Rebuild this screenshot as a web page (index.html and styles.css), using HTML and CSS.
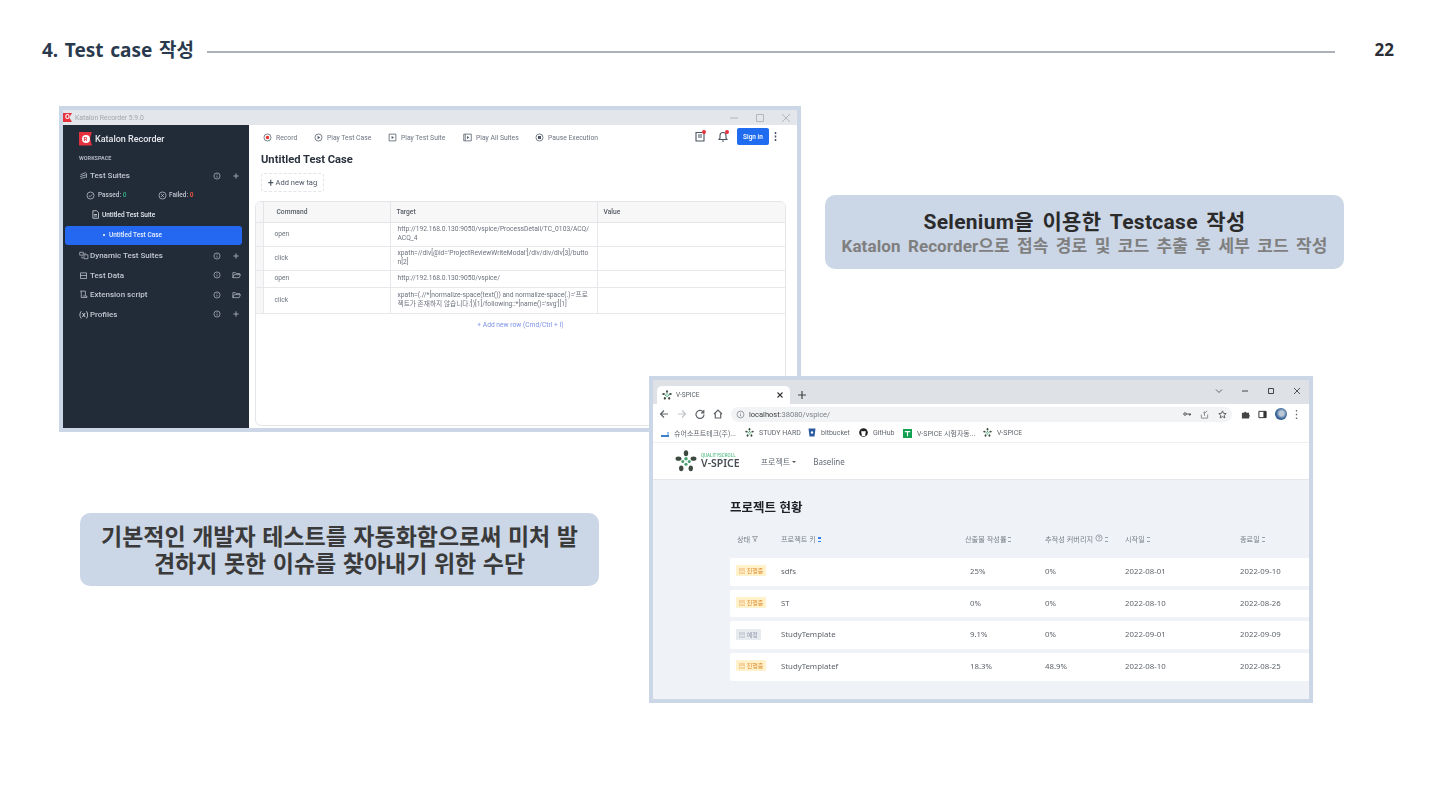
FILE: index.html
```html
<!DOCTYPE html>
<html lang="ko">
<head>
    <meta charset="UTF-8">
    <title>4. Test case 작성</title>
    <link rel="stylesheet" href="styles.css">
</head>
<body>
    <svg class="icon-defs" width="0" height="0">
        <symbol id="i-info" viewBox="0 0 12 12"><circle cx="6" cy="6" r="4.6" fill="none" stroke="currentColor"/><path d="M6 5.4v3M6 3.5v1" stroke="currentColor"/></symbol>
        <symbol id="i-plus" viewBox="0 0 12 12"><path d="M6 2v8M2 6h8" stroke="currentColor" stroke-width="1.1"/></symbol>
        <symbol id="i-folder" viewBox="0 0 14 12"><path d="M1.5 10V2.5h4l1 1.300h5V5.500M1.500 10l2-4.500h9.500l-2 4.500z" fill="none" stroke="currentColor"/></symbol>
        <symbol id="i-ring" viewBox="0 0 12 12"><circle cx="6" cy="6" r="4.700" fill="none" stroke="currentColor"/></symbol>
        <symbol id="i-flower" viewBox="0 0 24 24">
            <g fill="#3d4a3f">
                <ellipse cx="12" cy="3.500" rx="2.400" ry="3.200"/>
                <ellipse cx="3.800" cy="9.500" rx="3.200" ry="2.300"/>
                <ellipse cx="20.200" cy="9.500" rx="3.200" ry="2.300"/>
                <ellipse cx="6.800" cy="20" rx="2.400" ry="3.200"/>
                <ellipse cx="17.200" cy="20" rx="2.400" ry="3.200"/>
            </g>
            <g fill="#46a36f">
                <circle cx="12" cy="9.500" r="1.900"/>
                <circle cx="8.500" cy="12.500" r="1.700"/>
                <circle cx="15.500" cy="12.500" r="1.700"/>
                <circle cx="12" cy="15.500" r="1.700"/>
            </g>
        </symbol>
    </svg>

    <div class="slide">
        <header class="slide-head">
            <h1>4. Test case 작성</h1>
            <div class="head-line"></div>
            <div class="page-no">22</div>
        </header>

        <!-- Katalon 캡처 -->
        <section class="shot katalon">
            <div class="k-title">
                <span class="k-favicon">O</span>
                <span class="k-title-text">Katalon Recorder 5.9.0</span>
                <div class="win-btns">
                    <svg width="8" height="8" viewBox="0 0 8 8"><path d="M0 4h8" stroke="#b4b8bd"/></svg>
                    <svg width="8" height="8" viewBox="0 0 8 8"><path d="M.5.500h7v7h-7z" fill="none" stroke="#b4b8bd"/></svg>
                    <svg width="8" height="8" viewBox="0 0 8 8"><path d="M0 0l8 8M8 0l-8 8" stroke="#b4b8bd"/></svg>
                </div>
            </div>
            <div class="k-body">
                <aside class="k-side">
                    <div class="k-brand"><span class="k-logo"><span class="k-logo-r">R</span></span>Katalon Recorder</div>
                    <div class="k-workspace">WORKSPACE</div>
                    <div class="side-row">
                        <svg class="side-ico" viewBox="0 0 12 12"><path d="M2 5l7-3M1.500 7.500l8-2.500M2 10l7-2M10 3v6" fill="none" stroke="currentColor"/></svg>
                        <span>Test Suites</span>
                        <div class="side-acts"><svg><use href="#i-info"/></svg><svg><use href="#i-plus"/></svg></div>
                    </div>
                    <div class="side-row stats">
                        <svg class="side-ico" viewBox="0 0 12 12"><circle cx="6" cy="6" r="4.700" fill="none" stroke="currentColor"/><path d="M3.800 6l1.600 1.600 3-3" fill="none" stroke="currentColor"/></svg>
                        <span class="stat-label">Passed: <b class="ok">0</b></span>
                        <svg class="side-ico" viewBox="0 0 12 12"><circle cx="6" cy="6" r="4.700" fill="none" stroke="currentColor"/><path d="M4.200 4.200l3.600 3.600M7.800 4.200l-3.600 3.600" stroke="currentColor"/></svg>
                        <span>Failed: <b class="bad">0</b></span>
                    </div>
                    <div class="side-row suite">
                        <svg class="side-ico" viewBox="0 0 12 12"><path d="M2.500 1h5l2.500 2.500V11h-7.500zM4 6h4M4 8h4" fill="none" stroke="#e4e8ee"/></svg>
                        <span>Untitled Test Suite</span>
                    </div>
                    <div class="side-row selected"><i class="dot"></i>Untitled Test Case</div>
                    <div class="side-row">
                        <svg class="side-ico wide" viewBox="0 0 14 12"><path d="M1 1.500h5v4h-5zM7 5h5.500v5.500h-5.500zM4 7.500v2h2M9.500 3h-2" fill="none" stroke="currentColor"/></svg>
                        <span>Dynamic Test Suites</span>
                        <div class="side-acts"><svg><use href="#i-info"/></svg><svg><use href="#i-plus"/></svg></div>
                    </div>
                    <div class="side-row">
                        <svg class="side-ico" viewBox="0 0 12 12"><path d="M2 2.500h8v7.500h-8zM2 6h8" fill="none" stroke="currentColor"/></svg>
                        <span>Test Data</span>
                        <div class="side-acts"><svg><use href="#i-info"/></svg><svg class="fold"><use href="#i-folder"/></svg></div>
                    </div>
                    <div class="side-row">
                        <svg class="side-ico" viewBox="0 0 12 12"><path d="M1.500 1.500h7v6M3 1.500v8.500h7.500V8H5" fill="none" stroke="currentColor"/></svg>
                        <span>Extension script</span>
                        <div class="side-acts"><svg><use href="#i-info"/></svg><svg class="fold"><use href="#i-folder"/></svg></div>
                    </div>
                    <div class="side-row">
                        <span class="x-ico">(x)</span>
                        <span>Profiles</span>
                        <div class="side-acts"><svg><use href="#i-info"/></svg><svg><use href="#i-plus"/></svg></div>
                    </div>
                </aside>

                <main class="k-main">
                    <div class="k-toolbar">
                        <div class="tool tool-record">
                            <svg viewBox="0 0 12 12"><use href="#i-ring"/><circle cx="6" cy="6" r="2.300" fill="#e8322e"/></svg>Record
                        </div>
                        <div class="tool tool-case">
                            <svg viewBox="0 0 12 12"><use href="#i-ring"/><path d="M4.800 3.800v4.400L8.200 6z" fill="currentColor"/></svg>Play Test Case
                        </div>
                        <div class="tool tool-suite">
                            <svg viewBox="0 0 12 12"><path d="M1.500 1.500h9v9h-9z" fill="none" stroke="currentColor"/><path d="M4.800 4v4L8 6z" fill="currentColor"/></svg>Play Test Suite
                        </div>
                        <div class="tool tool-all">
                            <svg viewBox="0 0 12 12"><path d="M1 1.500h10v9H1zM3 1.500v9" fill="none" stroke="currentColor"/><path d="M5.300 4v4l3-2z" fill="currentColor"/></svg>Play All Suites
                        </div>
                        <div class="tool tool-pause">
                            <svg viewBox="0 0 12 12"><use href="#i-ring"/><path d="M4 4h4v4H4z" fill="currentColor"/></svg>Pause Execution
                        </div>
                        <div class="tool-right">
                            <span class="has-badge">
                                <svg width="10" height="11" viewBox="0 0 10 11"><path d="M1 1.500h8v8.500H1zM3 4h4M3 6h4" fill="none" stroke="#4b5563" stroke-width="1.100"/></svg>
                            </span>
                            <span class="has-badge short">
                                <svg width="10" height="11" viewBox="0 0 10 11"><path d="M1 8.500h8L8 7V4.500a3 3 0 0 0-6 0V7zM4 10h2" fill="none" stroke="#4b5563" stroke-width="1.100"/></svg>
                            </span>
                            <button class="sign-in">Sign in</button>
                            <svg class="kebab" width="3" height="9" viewBox="0 0 3 9"><path d="M1.500 0v2M1.500 3.500v2M1.500 7v2" stroke="#4b5563" stroke-width="1.500"/></svg>
                        </div>
                    </div>
                    <h2 class="k-case-title">Untitled Test Case</h2>
                    <div class="add-tag"><b>+</b> Add new tag</div>

                    <div class="k-table-box">
                        <table class="k-table">
                            <thead>
                                <tr><th class="gut"></th><th class="col-cmd">Command</th><th class="col-target">Target</th><th>Value</th></tr>
                            </thead>
                            <tbody>
                                <tr class="h24"><td class="gut"></td><td class="cmd">open</td><td>http://192.168.0.130:9050/vspice/ProcessDetail/TC_0103/ACQ/<br>ACQ_4</td><td></td></tr>
                                <tr class="h24"><td class="gut"></td><td class="cmd">click</td><td>xpath=//div[@id='ProjectReviewWriteModal']/div/div/div[3]/butto<br>n[2]</td><td></td></tr>
                                <tr class="h17"><td class="gut"></td><td class="cmd">open</td><td>http://192.168.0.130:9050/vspice/</td><td></td></tr>
                                <tr class="h26"><td class="gut"></td><td class="cmd">click</td><td>xpath=(.//*[normalize-space(text()) and normalize-space(.)='프로<br>젝트가 존재하지 않습니다.'])[1]/following::*[name()='svg'][1]</td><td></td></tr>
                            </tbody>
                        </table>
                        <div class="add-row">+ Add new row (Cmd/Ctrl + I)</div>
                    </div>
                </main>
            </div>
        </section>

        <div class="callout callout-top">
            <div class="callout-title">Selenium을 이용한 Testcase 작성</div>
            <div class="callout-sub">Katalon Recorder으로 접속 경로 및 코드 추출 후 세부 코드 작성</div>
        </div>

        <div class="callout callout-left">
            기본적인 개발자 테스트를 자동화함으로써 미처 발<br>견하지 못한 이슈를 찾아내기 위한 수단
        </div>

        <!-- 브라우저 캡처 -->
        <section class="shot chrome">
            <div class="c-tabs">
                <div class="c-tab">
                    <svg width="10" height="10"><use href="#i-flower"/></svg>
                    <span>V-SPICE</span>
                    <svg class="tab-x" width="6" height="6" viewBox="0 0 6 6"><path d="M.5.500l5 5M5.500.500l-5 5" stroke="#333" stroke-width="1.100"/></svg>
                </div>
                <svg class="tab-plus" width="8" height="8" viewBox="0 0 8 8"><path d="M4 0v8M0 4h8" stroke="#444" stroke-width="1.200"/></svg>
                <div class="c-win-btns">
                    <svg width="8" height="8" viewBox="0 0 8 8"><path d="M1 2.500l3 3 3-3" fill="none" stroke="#666"/></svg>
                    <svg width="8" height="8" viewBox="0 0 8 8"><path d="M1 4h6" stroke="#444"/></svg>
                    <svg width="8" height="8" viewBox="0 0 8 8"><path d="M1.500 1.500h5v5h-5z" fill="none" stroke="#444"/></svg>
                    <svg width="8" height="8" viewBox="0 0 8 8"><path d="M1 1l6 6M7 1l-6 6" stroke="#555"/></svg>
                </div>
            </div>
            <div class="c-toolbar">
                <svg width="10" height="10" viewBox="0 0 10 10"><path d="M9 5H1.500M5 1.500L1.500 5 5 8.500" fill="none" stroke="#5f6368" stroke-width="1.200"/></svg>
                <svg width="10" height="10" viewBox="0 0 10 10"><path d="M1 5h7.500M5 1.500L8.500 5 5 8.500" fill="none" stroke="#c0c4c8" stroke-width="1.200"/></svg>
                <svg width="10" height="10" viewBox="0 0 10 10"><path d="M8.500 3.500A4 4 0 1 0 9 5.500M8.800 1v2.800H6" fill="none" stroke="#5f6368" stroke-width="1.200"/></svg>
                <svg width="10" height="10" viewBox="0 0 10 10"><path d="M1 5l4-4 4 4M2.300 4.500V9h5.400V4.500" fill="none" stroke="#5f6368" stroke-width="1.200"/></svg>
                <div class="omnibox">
                    <svg width="9" height="9" viewBox="0 0 12 12"><use href="#i-info"/></svg>
                    <span class="url"><b>localhost</b>:38080/vspice/</span>
                    <div class="omni-icons">
                        <svg width="8" height="8" viewBox="0 0 10 10"><circle cx="2.500" cy="5" r="1.600" fill="none" stroke="#444" stroke-width="1.100"/><path d="M4 5h6M8 5v2M9.500 5v1.500" stroke="#444" stroke-width="1.100"/></svg>
                        <svg width="9" height="9" viewBox="0 0 10 10"><path d="M1.500 5v4h7V5M5 6.500V2M5 2L3.500 3.500M8 1L4.500 4" fill="none" stroke="#888"/></svg>
                        <svg width="9" height="9" viewBox="0 0 10 10"><path d="M5 1l1.200 2.700 2.900.3-2.200 1.900.7 2.900L5 7.300 2.400 8.800l.7-2.900L.9 4l2.900-.3z" fill="none" stroke="#555"/></svg>
                    </div>
                </div>
                <div class="c-ext">
                    <svg width="9" height="9" viewBox="0 0 10 10"><path d="M1 3h2.500a1.300 1.300 0 0 1 2.500 0H9v2.300a1.300 1.300 0 0 1 0 2.400V9.500H1z" fill="#444"/></svg>
                    <svg width="9" height="9" viewBox="0 0 10 10"><path d="M1 1.500h8v7H1z" fill="none" stroke="#333" stroke-width="1.100"/><path d="M6 1.500h3v7H6z" fill="#333"/></svg>
                    <span class="avatar"></span>
                    <svg width="3" height="9" viewBox="0 0 3 9"><path d="M1.500 0v1.500M1.500 3.700v1.500M1.500 7.400v1.500" stroke="#666" stroke-width="1.300"/></svg>
                </div>
            </div>
            <div class="c-bookmarks">
                <div class="bm bm-1"><svg width="8" height="7" viewBox="0 0 8 7"><path d="M0 5h8v2H0z" fill="#3d7fc4"/><path d="M6 2h2v3H6z" fill="#9cc4e8"/></svg>슈어소프트테크(주)...</div>
                <div class="bm bm-2"><svg width="9" height="9"><use href="#i-flower"/></svg>STUDY HARD</div>
                <div class="bm bm-3"><svg width="8" height="9" viewBox="0 0 8 9"><path d="M.5.500h7L6.500 8.500h-5z" fill="#2c5a9e"/><circle cx="4" cy="4.500" r="1.200" fill="#fff"/></svg>bitbucket</div>
                <div class="bm bm-4"><svg width="9" height="9" viewBox="0 0 10 10"><circle cx="5" cy="5" r="4.800" fill="#222"/><path d="M3 9V7L2.500 4.500 3 3l1 .5h2L7 3l.5 1.500L7 7v2z" fill="#fff"/></svg>GitHub</div>
                <div class="bm bm-5"><svg width="9" height="9" viewBox="0 0 10 10"><path d="M0 0h10v10H0z" fill="#12a150"/><path d="M2 3h6M5 3v5" stroke="#fff" stroke-width="1.300"/></svg>V-SPICE 시험자동...</div>
                <div class="bm bm-6"><svg width="9" height="9"><use href="#i-flower"/></svg>V-SPICE</div>
            </div>
            <div class="app-head">
                <svg class="app-logo" width="24" height="22"><use href="#i-flower"/></svg>
                <div class="app-brand">
                    <div class="app-brand-top">QUALITYSCROLL</div>
                    <div class="app-brand-name">V-SPICE</div>
                </div>
                <nav class="app-nav">
                    <span>프로젝트 <i class="caret"></i></span>
                    <span>Baseline</span>
                </nav>
            </div>
            <div class="app-body">
                <h2 class="app-title">프로젝트 현황</h2>
                <div class="p-head p-grid">
                    <span>상태 <svg width="6" height="6" viewBox="0 0 6 6"><path d="M.5.500h5L3.600 3v2.500L2.400 5V3z" fill="none" stroke="#888" stroke-width=".7"/></svg></span>
                    <span>프로젝트 키 <i class="sort on"></i></span>
                    <span>산출물 작성률 <i class="sort"></i></span>
                    <span>추적성 커버리지 <svg width="8" height="8" viewBox="0 0 12 12"><use href="#i-ring"/><path d="M4.500 4.800a1.500 1.500 0 1 1 1.500 1.700v1M6 8.500v1" fill="none" stroke="currentColor"/></svg> <i class="sort"></i></span>
                    <span>시작일 <i class="sort"></i></span>
                    <span>종료일 <i class="sort"></i></span>
                </div>
                <div class="p-rows">
                    <div class="p-row p-grid">
                        <span><em class="badge">▤ 진행중</em></span><span>sdfs</span><span class="pct">25%</span><span>0%</span><span>2022-08-01</span><span>2022-09-10</span>
                    </div>
                    <div class="p-row p-grid">
                        <span><em class="badge">▤ 진행중</em></span><span>ST</span><span class="pct">0%</span><span>0%</span><span>2022-08-10</span><span>2022-08-26</span>
                    </div>
                    <div class="p-row p-grid">
                        <span><em class="badge plan">▤ 예정</em></span><span>StudyTemplate</span><span class="pct">9.1%</span><span>0%</span><span>2022-09-01</span><span>2022-09-09</span>
                    </div>
                    <div class="p-row p-grid">
                        <span><em class="badge">▤ 진행중</em></span><span>StudyTemplatef</span><span class="pct">18.3%</span><span>48.9%</span><span>2022-08-10</span><span>2022-08-25</span>
                    </div>
                </div>
            </div>
        </section>
    </div>
</body>
</html>
```

FILE: styles.css
```css
* {
    box-sizing: border-box;
}
body {
    margin: 0;
    background-color: white;
    font-family: "Noto Sans", "Noto Sans CJK KR", sans-serif;
}
.icon-defs {
    position: absolute;
}
.slide {
    position: relative;
    width: 1436px;
    height: 802px;
    overflow: hidden;
}
.slide-head {
    display: flex;
    align-items: center;
    padding: 36px 42px 0;
    height: 63px;
}
.slide-head h1 {
    margin: 0;
    width: 165px;
    font-size: 19px;
    line-height: 26px;
    font-weight: 700;
    word-spacing: 1.700px;
    color: #2a3a4e;
    white-space: nowrap;
}
.head-line {
    flex: 1;
    height: 2px;
    margin-top: 4px;
    background-color: #aeb2b7;
}
.page-no {
    width: 59px;
    text-align: right;
    font-size: 17px;
    font-weight: 700;
    color: #2b2f35;
}

/* 캡처 창 공통 */
.shot {
    position: absolute;
    border: 4px solid #cbd6e6;
    background-color: white;
    overflow: hidden;
    font-family: Roboto, "Noto Sans CJK KR", sans-serif;
    filter: blur(0.35px);
}
.shot svg {
    flex: none;
}
.katalon {
    left: 59px;
    top: 106px;
    width: 742px;
    height: 326px;
}
.chrome {
    left: 649px;
    top: 376px;
    width: 664px;
    height: 327px;
    display: flex;
    flex-direction: column;
}

/* Katalon */
.k-title {
    display: flex;
    align-items: center;
    height: 15px;
    background-color: #e3e6ea;
}
.k-favicon {
    width: 9px;
    height: 9px;
    background-color: #e5323e;
    color: white;
    font-size: 7px;
    line-height: 9px;
    font-weight: 700;
    text-align: center;
    clip-path: polygon(0 0, 100% 0, 70% 50%, 100% 100%, 0 100%);
}
.k-title-text {
    margin-left: 3px;
    font-size: 6.800px;
    color: #a3a7ac;
}
.win-btns {
    display: flex;
    gap: 18px;
    margin-left: auto;
    padding-right: 7px;
}
.k-body {
    display: flex;
    height: 303px;
}
.k-side {
    width: 186px;
    padding-top: 6px;
    background-color: #222b38;
    color: #c2c8d1;
    font-size: 8px;
    font-weight: 500;
}
.k-brand {
    display: flex;
    align-items: center;
    height: 15px;
    padding-left: 16px;
    font-size: 9px;
    color: #e6e9ee;
}
.k-logo {
    display: flex;
    align-items: center;
    justify-content: center;
    width: 13px;
    height: 14px;
    margin-right: 3px;
    background-color: #e5323e;
    clip-path: polygon(0 0, 100% 0, 85% 50%, 100% 100%, 0 100%);
}
.k-logo-r {
    width: 8px;
    height: 8px;
    border-radius: 50%;
    background-color: white;
    color: #e5323e;
    font-size: 6px;
    line-height: 8px;
    font-weight: 700;
    text-align: center;
}
.k-workspace {
    padding: 7px 0 0 16px;
    height: 20px;
    font-size: 5.500px;
    line-height: 11px;
    font-weight: 700;
    color: #aeb5c0;
}
.side-row {
    display: flex;
    align-items: center;
    height: 19.500px;
    padding: 0 9px 0 16px;
    white-space: nowrap;
}
.side-ico {
    width: 9px;
    height: 9px;
    margin-right: 2px;
}
.side-ico.wide {
    width: 10px;
    margin-right: 1px;
}
.side-acts {
    display: flex;
    gap: 11px;
    margin-left: auto;
}
.side-acts svg {
    width: 8px;
    height: 8px;
}
.side-acts svg.fold {
    width: 11px;
    margin: 0 -1.500px;
}
.stats {
    padding-left: 23px;
    font-size: 6.500px;
}
.stat-label {
    width: 60px;
    margin-left: 1px;
}
.stats b {
    font-weight: 700;
}
.ok {
    color: #2fa37c;
}
.bad {
    color: #e5533d;
}
.suite {
    padding-left: 28px;
    font-size: 6.500px;
    color: #e4e8ee;
}
.selected {
    height: 19.500px;
    margin: 1px 7px 1px 2px;
    padding-left: 38px;
    background-color: #2468f2;
    border-radius: 3px;
    font-size: 6.500px;
    color: #e8effd;
}
.dot {
    width: 2px;
    height: 2px;
    margin-right: 4px;
    border-radius: 50%;
    background-color: white;
}
.x-ico {
    width: 11px;
    margin-right: 0;
}
.k-main {
    flex: 1;
    min-width: 0;
    padding: 0 11px 0 6px;
}
.k-toolbar {
    position: relative;
    height: 25px;
    font-size: 6.800px;
    color: #6e7480;
}
/* 툴바 항목은 캡처 원본 위치 그대로 */
.tool {
    position: absolute;
    top: 8px;
    display: flex;
    align-items: center;
    gap: 4px;
    white-space: nowrap;
}
.tool svg {
    width: 9px;
    height: 9px;
    color: #4b5563;
}
.tool-record { left: 8px; }
.tool-case { left: 59px; }
.tool-suite { left: 133px; }
.tool-all { left: 208px; }
.tool-pause { left: 280px; }
.tool-right {
    position: absolute;
    right: 10px;
    top: 3px;
    display: flex;
    align-items: center;
}
.has-badge {
    position: relative;
    display: flex;
    width: 23px;
}
.has-badge.short {
    width: 18px;
}
.has-badge::after {
    content: "";
    position: absolute;
    left: 7px;
    top: -1px;
    width: 4px;
    height: 4px;
    border-radius: 50%;
    background-color: #e5323e;
}
.sign-in {
    width: 32px;
    height: 17px;
    margin-left: 1px;
    padding: 0;
    border: none;
    border-radius: 2px;
    background-color: #1f6cf0;
    color: white;
    font-family: inherit;
    font-size: 6.500px;
    font-weight: 500;
}
.kebab {
    margin: 0 -1px 0 5px;
}
.k-case-title {
    margin: 1px 0 0 6px;
    font-size: 11.200px;
    line-height: 18px;
    font-weight: 700;
    color: #2a323e;
}
.add-tag {
    display: flex;
    align-items: center;
    gap: 2px;
    width: 63px;
    height: 19px;
    margin: 4px 0 0 6px;
    padding-left: 6px;
    border: 1px dashed #e2e4e8;
    border-radius: 3px;
    font-size: 7.500px;
    color: #4b5563;
    white-space: nowrap;
}
.add-tag b {
    font-size: 10px;
    font-weight: 500;
}
.k-table-box {
    height: 225px;
    margin-top: 9px;
    border: 1px solid #e4e6ea;
    border-radius: 6px;
    overflow: hidden;
}
.k-table {
    width: 100%;
    table-layout: fixed;
    border-collapse: collapse;
    font-size: 6.700px;
    color: #6b717c;
}
.k-table th {
    height: 20px;
    padding: 0 0 0 6px;
    background-color: #f7f7f8;
    border-right: 1px solid #e2e4e8;
    border-bottom: 1px solid #e2e4e8;
    text-align: left;
    font-weight: 500;
    color: #555b66;
}
.k-table th:last-child,
.k-table td:last-child {
    border-right: none;
}
.k-table th.gut,
.k-table td.gut {
    width: 7px;
    padding: 0;
    background-color: #f7f7f8;
}
.col-cmd {
    width: 127px;
}
.k-table th.col-cmd {
    padding-left: 13px;
}
.col-target {
    width: 207px;
}
.k-table td {
    padding: 0 0 0 7px;
    border-right: 1px solid #e6e8eb;
    border-bottom: 1px solid #e6e8eb;
    line-height: 9px;
    white-space: nowrap;
    overflow: hidden;
}
.k-table td.cmd {
    padding-left: 11px;
}
.h24 {
    height: 24px;
}
.h17 {
    height: 17px;
}
.h26 {
    height: 26px;
}
.add-row {
    padding-top: 7px;
    text-align: center;
    font-size: 6.700px;
    color: #7f93e8;
}

/* 설명 박스 */
.callout {
    position: absolute;
    width: 519px;
    background-color: #cbd6e6;
    border-radius: 10px;
    text-align: center;
    font-family: Roboto, "Noto Sans CJK KR", sans-serif;
    font-weight: 700;
    color: #2b2b2b;
}
.callout-top {
    left: 825px;
    top: 195px;
    height: 74px;
    padding-top: 14px;
}
.callout-title {
    font-size: 21px;
    line-height: 27px;
    letter-spacing: 0.300px;
    word-spacing: 3px;
}
.callout-sub {
    font-size: 17px;
    line-height: 20px;
    letter-spacing: 0.100px;
    word-spacing: 3px;
    color: #7f7f7f;
}
.callout-left {
    left: 80px;
    top: 513px;
    height: 73px;
    padding-top: 11px;
    font-size: 23px;
    line-height: 27px;
    word-spacing: 0.800px;
    color: #3a3a3a;
}

/* 브라우저 */
.c-tabs {
    position: relative;
    display: flex;
    align-items: flex-end;
    height: 24px;
    flex: none;
    padding-left: 4px;
    background-color: #dee1e6;
}
.c-tab {
    display: flex;
    align-items: center;
    width: 133px;
    height: 18px;
    padding: 0 7px 0 5px;
    background-color: white;
    border-radius: 5px 5px 0 0;
    font-size: 6.500px;
    color: #5b6067;
}
.c-tab span {
    margin-left: 4px;
}
.tab-x {
    margin-left: auto;
}
.tab-plus {
    margin: 0 0 5px 8px;
}
.c-win-btns {
    display: flex;
    gap: 18px;
    margin: 0 8px 9px auto;
}
.c-toolbar {
    display: flex;
    align-items: center;
    flex: none;
    height: 20px;
    padding: 0 11px 0 6px;
    gap: 8px;
}
.omnibox {
    display: flex;
    align-items: center;
    width: 501px;
    height: 15px;
    padding: 0 5px 0 5px;
    border-radius: 8px;
    background-color: #f1f3f4;
    font-size: 7.500px;
    color: #7d8288;
}
.url {
    margin-left: 4px;
}
.url b {
    font-weight: 400;
    color: #3c4043;
}
.omni-icons {
    display: flex;
    gap: 9px;
    margin-left: auto;
}
.c-ext {
    display: flex;
    align-items: center;
    gap: 8px;
    margin-left: 1px;
}
.avatar {
    width: 12px;
    height: 12px;
    border-radius: 50%;
    background: radial-gradient(circle at 55% 45%, #b9c7d6 0 25%, #2f5d92 60%);
}
.c-bookmarks {
    position: relative;
    height: 19px;
    flex: none;
    border-bottom: 1px solid #eceef0;
    font-size: 7px;
    color: #62676e;
}
/* 북마크 위치는 캡처 그대로 */
.bm {
    position: absolute;
    top: 4px;
    display: flex;
    align-items: center;
    gap: 5px;
    white-space: nowrap;
}
.bm-1 { left: 8px; }
.bm-2 { left: 92px; }
.bm-3 { left: 155px; }
.bm-4 { left: 206px; }
.bm-5 { left: 250px; }
.bm-6 { left: 330px; }
.app-head {
    display: flex;
    align-items: center;
    flex: none;
    height: 37px;
    padding-left: 21px;
    background-color: white;
    border-bottom: 1px solid #e4e7ec;
}
.app-brand {
    margin-left: 3px;
    line-height: 1;
}
.app-brand-top {
    font-size: 4.500px;
    font-weight: 500;
    color: #5bbf8a;
}
.app-brand-name {
    font-family: "Noto Sans", sans-serif;
    font-size: 10.500px;
    font-weight: 600;
    color: #4a4f55;
}
.app-nav {
    display: flex;
    gap: 17px;
    margin-left: 21px;
    font-family: "Noto Sans", "Noto Sans CJK KR", sans-serif;
    font-size: 8px;
    color: #636a75;
}
.caret {
    display: inline-block;
    vertical-align: middle;
    border: 2px solid transparent;
    border-top-color: #555;
    border-bottom: none;
}
.app-body {
    flex: 1;
    padding: 18px 0 0 77px;
    background-color: #eff2f7;
}
.app-title {
    margin: 0;
    height: 17px;
    font-family: "Noto Sans CJK KR", sans-serif;
    font-size: 12.500px;
    line-height: 17px;
    font-weight: 700;
    color: #1d2025;
}
.p-grid {
    display: grid;
    grid-template-columns: 44px 184px 80px 80px 115px 1fr;
    align-items: center;
    padding-left: 7px;
    white-space: nowrap;
}
.p-head {
    height: 17px;
    margin: 15px 0 11px;
    font-family: "Noto Sans", "Noto Sans CJK KR", sans-serif;
    font-size: 7.200px;
    color: #7a7f87;
}
.sort {
    display: inline-block;
    width: 3px;
    height: 5px;
    vertical-align: middle;
    border-top: 1.500px solid #9aa0a8;
    border-bottom: 1.500px solid #9aa0a8;
}
.sort.on {
    border-top-color: #2f80ed;
    border-bottom-color: #2f80ed;
    border-top-width: 2.500px;
}
.p-rows {
    display: flex;
    flex-direction: column;
    gap: 4px;
}
.p-row {
    height: 27.700px;
    padding-bottom: 2px;
    background-color: white;
    border-radius: 2px 0 0 2px;
    font-family: "Noto Sans", sans-serif;
    font-size: 7.800px;
    color: #5f646b;
}
.pct {
    padding-left: 5px;
}
.badge {
    display: inline-block;
    height: 11px;
    margin-left: -1px;
    padding: 0 3px;
    background-color: #fff1c9;
    border-radius: 1px;
    font-family: "Noto Sans CJK KR", sans-serif;
    font-size: 6px;
    line-height: 11px;
    font-style: normal;
    color: #e08a2c;
}
.badge.plan {
    background-color: #e6ebf0;
    color: #8c96a3;
}
```
